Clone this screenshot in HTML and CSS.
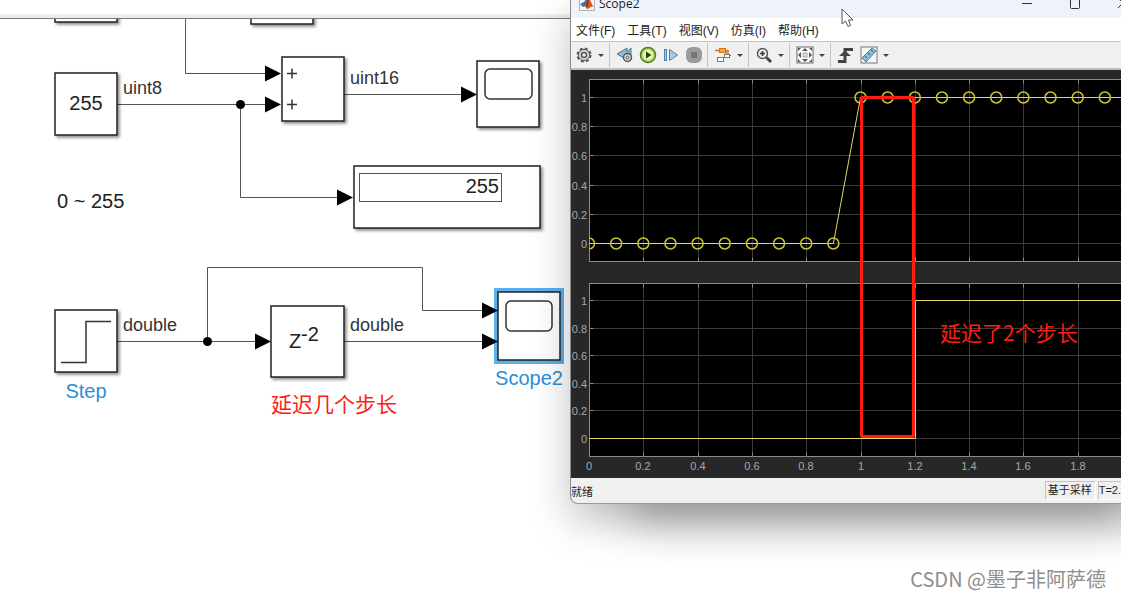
FILE: index.html
```html
<!DOCTYPE html>
<html lang="zh-CN">
<head>
  <meta charset="UTF-8" />
  <meta name="viewport" content="width=device-width, initial-scale=1.0"/>
  <title>Scope2</title>
  <link rel="stylesheet" href="styles.css">
</head>
<body>

<div class="desktop">
  <main class="model">
    <div class="model-bar"></div>
    <svg class="diagram" width="570" height="500" viewBox="0 19 570 500">
      <defs>
        <filter id="drop" x="-20%" y="-20%" width="150%" height="150%">
          <feDropShadow dx="2" dy="2" stdDeviation="1.5" flood-color="#000" flood-opacity="0.45"/>
        </filter>
      </defs>

      <!-- wires -->
      <g class="wire">
        <path d="M185.5 19V73.5H266"/>
        <path d="M117 104.5H266"/>
        <path d="M240.5 104V197.5H338"/>
        <path d="M344 94.5H462"/>
        <path d="M117 341.5H256"/>
        <path d="M207.5 341V267.5H422.5V310.5H482"/>
        <path d="M344 341.5H482"/>
      </g>
      <circle cx="240.5" cy="104.5" r="4.5"/>
      <circle cx="207.5" cy="341.5" r="4.5"/>

      <!-- blocks -->
      <g class="block" filter="url(#drop)">
        <rect x="55" y="0" width="62" height="22"/>
        <rect x="251" y="0" width="62" height="24"/>
        <rect x="55" y="73" width="62" height="62"/>
        <rect x="282" y="57" width="62" height="64"/>
        <rect x="477" y="61" width="62" height="66"/>
        <rect x="354" y="166" width="186" height="62"/>
        <rect x="55" y="310" width="62" height="62"/>
        <rect x="271" y="306" width="73" height="71"/>
      </g>
      <rect class="selected" x="496" y="290" width="66" height="72"/>
      <g class="block">
        <rect x="498" y="292" width="62" height="68"/>
      </g>

      <g class="arrow">
        <path d="M265 65.500L281 73.500L265 81.500Z"/>
        <path d="M265 96.500L281 104.500L265 112.500Z"/>
        <path d="M337 189.500L353 197.500L337 205.500Z"/>
        <path d="M461 86.500L477 94.500L461 102.500Z"/>
        <path d="M255 333.500L271 341.500L255 349.500Z"/>
        <path d="M482 302.500L498 310.500L482 318.500Z"/>
        <path d="M482 333.500L498 341.500L482 349.500Z"/>
      </g>

      <g class="glyph">
        <rect x="485" y="69" width="47" height="30" rx="5"/>
        <rect x="506" y="301" width="46" height="30" rx="5"/>
        <path d="M61 362.500H86V321.500H111"/>
        <path d="M287 73.500H297M292 68.500V78.500M287 104.500H297M292 99.500V109.500"/>
      </g>
      <rect class="readout" x="359.500" y="173.500" width="142" height="28"/>

      <g class="value">
        <text x="86" y="110" text-anchor="middle">255</text>
        <text x="499" y="193" text-anchor="end">255</text>
        <text x="57" y="208">0 ~ 255</text>
        <text x="289" y="348">Z</text>
        <text x="301" y="341">-2</text>
      </g>
      <g class="type">
        <text x="123" y="94">uint8</text>
        <text x="350" y="84">uint16</text>
        <text x="123" y="331">double</text>
        <text x="350" y="331">double</text>
      </g>
      <g class="name">
        <text x="86" y="398" text-anchor="middle">Step</text>
        <text x="529" y="385" text-anchor="middle">Scope2</text>
      </g>
      <text class="note" x="271" y="412">延迟几个步长</text>
    </svg>
  </main>

  <section class="scope">
    <header class="titlebar">
      <svg class="logo" width="16" height="16" viewBox="0 0 16 16">
        <rect x="0.500" y="0.500" width="15" height="15" fill="#f4f6f8" stroke="#aab2ba"/>
        <path d="M1 9L5 7L9 2L7 11L4 12Z" fill="#2f76b5"/>
        <path d="M9 2C11 3 12 9 15 12C12 10 10 14 8 14L6 11Z" fill="#d9541e"/>
        <path d="M9 2L7 11L8 13C9 10 10 7 9 2Z" fill="#8c2a14"/>
      </svg>
      <h1>Scope2</h1>
      <div class="window-btns">
        <button aria-label="最小化"><svg width="12" height="12"><path d="M1 6.500H11"/></svg></button>
        <button aria-label="最大化"><svg width="12" height="12"><rect x="1.500" y="1.500" width="9" height="10" rx="1"/></svg></button>
        <button aria-label="关闭"><svg width="12" height="12"><path d="M1 1L11 11M11 1L1 11"/></svg></button>
      </div>
      <svg class="cursor" width="14" height="20" viewBox="0 0 14 20">
        <path d="M1 1V16L4.500 13L7 18.500L9.500 17.500L7.500 12H12Z" fill="#fff" stroke="#555"/>
      </svg>
    </header>

    <nav class="menu">
      <button>文件(F)</button>
      <button>工具(T)</button>
      <button>视图(V)</button>
      <button>仿真(I)</button>
      <button>帮助(H)</button>
    </nav>

    <div class="toolbar">
      <button class="tool" aria-label="配置">
        <svg width="18" height="18" viewBox="0 0 18 18" fill="none" stroke="#555">
          <circle cx="9" cy="9" r="6.500" stroke-width="2" stroke-dasharray="3 2.100"/>
          <circle cx="9" cy="9" r="5.500" fill="#ddd"/>
          <circle cx="9" cy="9" r="2.500" fill="#f4f4f4" stroke-width="1.500"/>
        </svg>
      </button>
      <button class="more" aria-label="更多配置"></button>
      <span class="sep"></span>
      <button class="tool" aria-label="步退">
        <svg width="18" height="18" viewBox="0 0 18 18">
          <path d="M1 8L11 2V6L15 2V14H11L8 12Z" fill="#8fb9d6" stroke="#4d7896"/>
          <circle cx="11.500" cy="11.500" r="4" fill="#ddd" stroke="#555" stroke-width="1.500"/>
          <circle cx="11.500" cy="11.500" r="1.500" fill="none" stroke="#555"/>
        </svg>
      </button>
      <button class="tool" aria-label="运行">
        <svg width="18" height="18" viewBox="0 0 18 18">
          <circle cx="9" cy="9" r="7.500" fill="#b5dc62" stroke="#56781f" stroke-width="1.500"/>
          <circle cx="9" cy="9" r="5" fill="#e6f4bd"/>
          <path d="M7 5.500L12.500 9L7 12.500Z" fill="#234012"/>
        </svg>
      </button>
      <button class="tool" aria-label="步进">
        <svg width="18" height="18" viewBox="0 0 18 18" fill="#a9cbe5" stroke="#4a80aa">
          <rect x="2.500" y="3.500" width="2" height="11"/>
          <path d="M7.500 3.500L15.500 9L7.500 14.500Z"/>
        </svg>
      </button>
      <button class="tool" aria-label="停止">
        <svg width="18" height="18" viewBox="0 0 18 18">
          <rect x="1" y="1" width="16" height="16" rx="6" fill="#9b9b9b"/>
          <rect x="6" y="6" width="6" height="6" fill="#777"/>
        </svg>
      </button>
      <span class="sep"></span>
      <button class="tool" aria-label="高亮模块">
        <svg width="18" height="18" viewBox="0 0 18 18" fill="none">
          <path d="M8 4.500H12V8M4 13.500H9M14 9.500H17" stroke="#777"/>
          <rect x="5.500" y="2.500" width="6" height="4" fill="#f9a24a" stroke="#d9711a"/>
          <path d="M1 4.500H5M12 4.500H14V8" stroke="#d9711a" stroke-width="1.500"/>
          <rect x="10.500" y="8.500" width="5" height="3" fill="#fff" stroke="#777"/>
          <rect x="3.500" y="11.500" width="6" height="4" fill="#fff" stroke="#777"/>
        </svg>
      </button>
      <button class="more" aria-label="更多高亮"></button>
      <span class="sep"></span>
      <button class="tool" aria-label="放大">
        <svg width="18" height="18" viewBox="0 0 18 18" fill="none" stroke="#555">
          <circle cx="7.500" cy="7.500" r="5" fill="#e8eef2" stroke-width="1.500"/>
          <path d="M5 7.500H10M7.500 5V10" stroke="#333" stroke-width="1.500"/>
          <path d="M11.500 11.500L16 16" stroke="#444" stroke-width="3"/>
        </svg>
      </button>
      <button class="more" aria-label="更多缩放"></button>
      <span class="sep"></span>
      <button class="tool" aria-label="缩放到适合">
        <svg width="18" height="18" viewBox="0 0 18 18">
          <rect x="1" y="1" width="16" height="16" fill="#fff" stroke="#666"/>
          <rect x="7" y="7" width="4" height="4" fill="#ddd" stroke="#aaa"/>
          <path d="M9 2L12 5H6ZM9 16L12 13H6ZM2 9L5 6V12ZM16 9L13 6V12Z" fill="#555"/>
          <path d="M2 2H5L2 5ZM16 2H13L16 5ZM2 16H5L2 13ZM16 16H13L16 13Z" fill="#555"/>
        </svg>
      </button>
      <button class="more" aria-label="更多适合"></button>
      <span class="sep"></span>
      <button class="tool" aria-label="触发">
        <svg width="18" height="18" viewBox="0 0 18 18">
          <path d="M1 15.500H8V3.500H16" fill="none" stroke="#444" stroke-width="3"/>
          <path d="M2 10L8 4.500L14 10Z" fill="#444"/>
        </svg>
      </button>
      <button class="tool" aria-label="测量">
        <svg width="18" height="18" viewBox="0 0 18 18">
          <rect x="1" y="1" width="16" height="16" fill="#f6f6f6" stroke="#777"/>
          <path d="M2 12L12 2L16 5L6 16Z" fill="#8cbcd8" stroke="#4c7c9a"/>
          <path d="M5 10L7 12M8 7L10 9M11 4L13 6" stroke="#356"/>
        </svg>
      </button>
      <button class="more" aria-label="更多测量"></button>
    </div>

    <svg class="plots" id="plots"></svg>

    <footer class="status">
      <span class="ready">就绪</span>
      <span class="panel">基于采样</span>
      <span class="panel time">T=2.</span>
    </footer>
  </section>

  <p class="watermark">CSDN @墨子非阿萨德</p>
</div>

<script>
const LEFT = 18;
const DT = 54.3; // px per 0.2 s
const plots = document.getElementById("plots");

function px(t) {
  return LEFT + t / 0.2 * DT;
}

function line(cls, x1, y1, x2, y2) {
  return `<path class="${cls}" d="M${Math.round(x1) + 0.5} ${Math.round(y1) + 0.5}L${Math.round(x2) + 0.5} ${Math.round(y2) + 0.5}"/>`;
}

function axes(top, bottom, one, zero, end) {
  let out = `<rect class="axes" x="${LEFT + 0.5}" y="${top + 0.5}" width="${end}" height="${bottom - top}"/>`;
  for (let i = 1; px(i * 0.2) < end; i++) {
    const x = px(i * 0.2);
    out += line("grid", x, top, x, bottom);
    out += line("tick", x, top, x, top + 4) + line("tick", x, bottom - 4, x, bottom);
  }
  for (let i = 0; i <= 5; i++) {
    const y = zero + (one - zero) * i / 5;
    out += line("grid", LEFT, y, end, y);
    out += line("tick", LEFT, y, LEFT + 4, y);
    out += `<text x="${LEFT - 2}" y="${Math.round(y) + 5}" text-anchor="end">${i / 5}</text>`;
  }
  return out;
}

function draw() {
  const end = plots.clientWidth || 550;
  let svg = axes(9, 191, 27, 173, end) + axes(213, 386, 230, 368, end);

  for (let i = 0; px(i * 0.2) < end - 10; i++) {
    svg += `<text x="${Math.round(px(i * 0.2))}" y="400" text-anchor="middle">${+(i * 0.2).toFixed(1)}</text>`;
  }

  // input step with its sample markers
  svg += `<clipPath id="clip"><rect x="${LEFT}" y="0" width="${end}" height="400"/></clipPath><g clip-path="url(#clip)">`;
  svg += `<path class="signal" d="M${LEFT} 173.5H${px(0.9)}L${px(1)} 27.5H${end}"/>`;
  for (let i = 0; px(i * 0.1) < end; i++) {
    svg += `<circle class="signal marker" cx="${px(i * 0.1)}" cy="${i < 10 ? 173.5 : 27.5}" r="5.5"/>`;
  }
  svg += "</g>";

  // delayed step
  svg += `<path class="signal" d="M${LEFT} 368.5H${Math.round(px(1.2)) + 0.5}V230.5H${end}"/>`;

  svg += `<rect class="mark" x="290.5" y="27.5" width="52" height="339" rx="1"/>`;
  svg += `<text class="note" x="369" y="271">延迟了2个步长</text>`;

  plots.innerHTML = svg;
}

draw();
window.addEventListener("resize", draw);
</script>
</body>
</html>
```
FILE: styles.css
```css
* {
  box-sizing: border-box;
}

body {
  margin: 0;
  font-family: "Liberation Sans", "Noto Sans CJK SC", sans-serif;
  background: #fff;
  color: #222;
}

button {
  border: none;
  padding: 0;
  background: none;
  color: inherit;
  font: inherit;
}

.desktop {
  display: flex;
  align-items: flex-start;
  position: relative;
  min-height: 100vh;
  overflow: hidden;
}

/* model canvas */
.model {
  flex: none;
}

.model-bar {
  height: 19px;
  border-bottom: 1px solid #777c84;
  background: linear-gradient(#fff 14px, #ececec 15px);
}

.diagram {
  display: block;
}

.wire path {
  fill: none;
  stroke: #555;
}

.block rect {
  fill: #fff;
  stroke: #222;
  stroke-width: 1.5;
}

.selected {
  fill: none;
  stroke: #58b0ec;
  stroke-width: 4;
}

.glyph rect,
.glyph path {
  fill: none;
  stroke: #333;
  stroke-width: 1.5;
}

.readout {
  fill: none;
  stroke: #555;
}

.value {
  font-size: 20px;
  fill: #222;
}

.type {
  font-size: 18px;
  fill: #333;
}

.name {
  font-size: 20px;
  fill: #2b8fd8;
}

text.note {
  font-family: "Noto Sans CJK SC", sans-serif;
  font-size: 21px;
  fill: #ff1c10;
}

/* scope window */
.scope {
  flex: 1;
  min-width: 0;
  border-left: 1px solid #8a8a8a;
  border-bottom: 1px solid #999;
  border-radius: 0 0 0 8px;
  background: #f0f0f0;
  box-shadow: 0 16px 40px rgba(0, 0, 0, 0.25), 60px 20px 40px rgba(0, 0, 0, 0.25);
  font-size: 12px;
}

.titlebar {
  display: flex;
  align-items: center;
  position: relative;
  height: 30px;
  margin-top: -12px;
  padding-left: 8px;
  background: #eef3f9;
}

.titlebar h1 {
  flex: 1;
  margin: 0 0 0 4px;
  font-family: "Open Sans", sans-serif;
  font-size: 12px;
  font-weight: 400;
}

.window-btns {
  display: flex;
  margin-right: -26px;
}

.window-btns button {
  display: flex;
  justify-content: center;
  width: 48px;
}

.window-btns svg {
  fill: none;
  stroke: #333;
}

.cursor {
  position: absolute;
  left: 270px;
  top: 20px;
  z-index: 1;
}

.menu {
  display: flex;
  gap: 12px;
  height: 24px;
  padding-left: 5px;
  border-bottom: 1px solid #c4c4c4;
  background: #fff;
}

.toolbar {
  display: flex;
  align-items: center;
  height: 28px;
  padding-left: 1px;
  border-bottom: 2px solid #bdbdbd;
}

.tool {
  display: flex;
  justify-content: center;
  width: 23px;
}

.more {
  display: flex;
  justify-content: center;
  width: 12px;
}

.more::after {
  content: "";
  border: 3px solid transparent;
  border-top-color: #444;
  border-bottom: none;
}

.sep {
  width: 1px;
  height: 24px;
  margin: 0 3px 0 2px;
  background: #c4c4c4;
}

.plots {
  display: block;
  width: 100%;
  height: 408px;
  background: #272727;
}

.plots text {
  font-size: 11px;
  fill: #a8a8a8;
}

.plots text.note {
  font-size: 21px;
  fill: #ff1c10;
}

.axes {
  fill: #000;
  stroke: #8c8c8c;
}

.grid {
  stroke: #3c3c3c;
}

.tick {
  stroke: #8c8c8c;
}

.signal {
  fill: none;
  stroke: #e0d868;
}

.marker {
  stroke: #cfc433;
  stroke-width: 1.5;
}

.mark {
  fill: none;
  stroke: #ff1c10;
  stroke-width: 3;
}

.status {
  display: flex;
  align-items: center;
  gap: 2px;
  height: 25px;
  font-size: 11px;
}

.ready {
  flex: 1;
}

.panel {
  height: 19px;
  padding: 0 3px 0 2px;
  border: 1px solid;
  border-color: #c4c4c4 #fff #fff #c4c4c4;
  line-height: 17px;
}

.time {
  padding: 0;
  border-right: none;
}

.watermark {
  position: absolute;
  right: 15px;
  bottom: 4px;
  margin: 0;
  color: #8e8e8e;
  font-family: "Noto Sans CJK SC", sans-serif;
  font-size: 20px;
  text-shadow: 1px 1px 0 #fff;
}
```
